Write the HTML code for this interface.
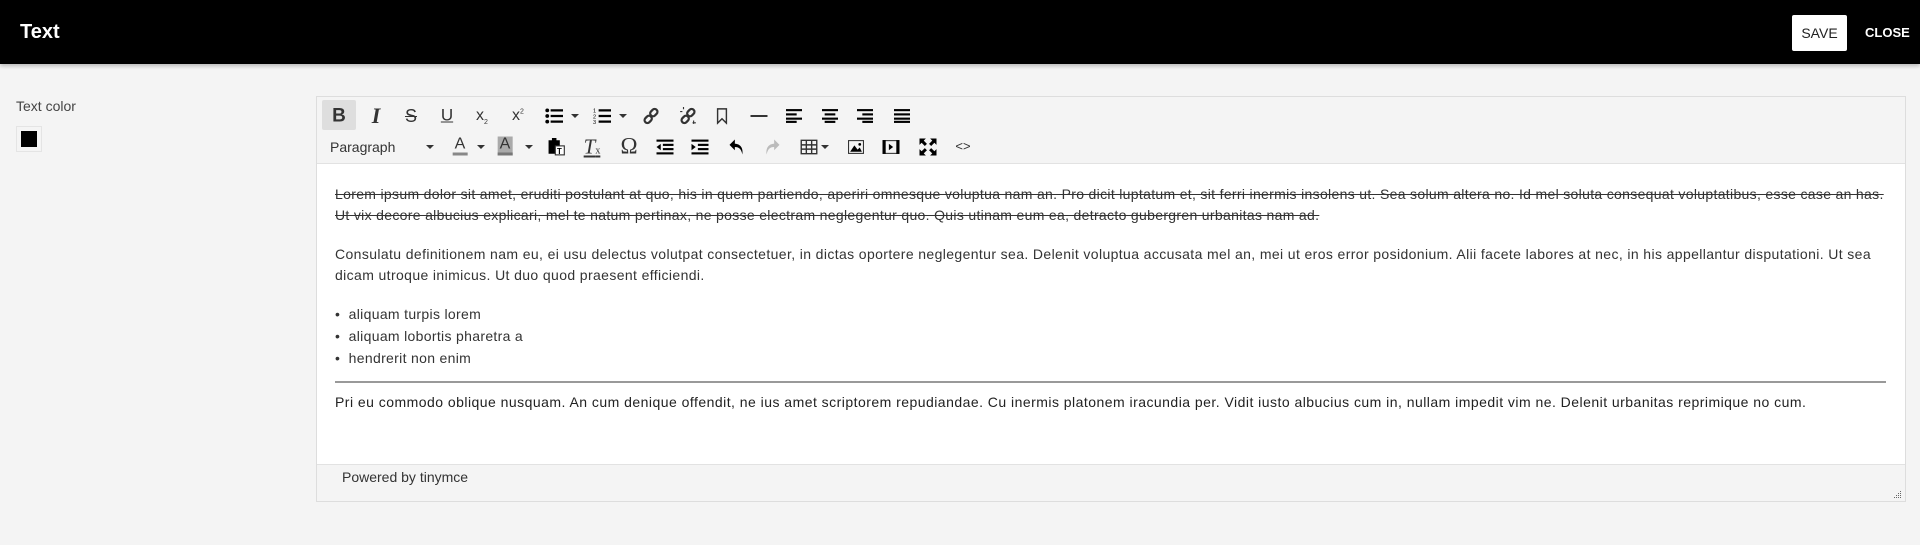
<!DOCTYPE html>
<html><head><meta charset="utf-8"><style>
*{margin:0;padding:0;box-sizing:border-box}
body{width:1920px;height:545px;background:#f4f4f4;font-family:"Liberation Sans",sans-serif;color:#333;position:relative;overflow:hidden}
.hdr{position:absolute;left:0;top:0;width:1920px;height:64px;background:#000;box-shadow:0 2px 4px rgba(0,0,0,.25)}
.hdr .t{position:absolute;left:20px;top:21px;font-size:20px;color:#fff;font-weight:bold}
.save{position:absolute;left:1792px;top:15px;width:55px;height:36px;background:#fff;border-radius:2px;font-size:14px;color:#222;text-align:center;line-height:36px}
.close{position:absolute;left:1865px;top:15px;line-height:36px;font-size:13px;color:#fff;font-weight:bold}
.lbl{position:absolute;left:16px;top:98px;font-size:14px;color:#444}
.sw{position:absolute;left:16px;top:126px;width:26px;height:26px;border:1px solid #e4e4e4;background:#f4f4f4}
.sw i{position:absolute;left:4px;top:4px;width:16px;height:16px;background:#000}
.ed{position:absolute;left:316px;top:96px;width:1590px;height:406px;border:1px solid #ddd;background:#f4f4f4}
.ct{position:absolute;left:0;top:66px;width:1588px;height:302px;background:#fff;border-top:1px solid #e2e2e2;border-bottom:1px solid #e2e2e2}
.ic{position:absolute;transform:translate(-50%,-50%);line-height:1;color:#333}
.bact{position:absolute;left:5px;top:3px;width:34px;height:30px;background:#dedede;border-radius:2px}
.tx{position:absolute;left:18px;font-size:14px;white-space:nowrap;color:#333;letter-spacing:.32px}
.car{position:absolute;width:0;height:0;border-left:4px solid transparent;border-right:4px solid transparent;border-top:4px solid #333;transform:translate(-50%,-50%)}
</style></head><body>
<div class="hdr"><div class="t">Text</div><div class="save">SAVE</div><div class="close">CLOSE</div></div>
<div class="lbl">Text color</div>
<div class="sw"><i></i></div>
<div class="ed">
<div class="bact"></div>
<div class="ic" style="left:22px;top:19px;font-weight:bold;font-size:19px">B</div>
<div class="ic" style="left:59px;top:19px;font-style:italic;font-family:'Liberation Serif',serif;font-size:22px;font-weight:bold">I</div>
<div class="ic" style="left:94px;top:19px;font-size:18px;text-decoration:line-through">S</div>
<div class="ic" style="left:130px;top:18px;font-size:17px;text-decoration:underline">U</div>
<div class="ic" style="left:165px;top:20px;font-size:16px">x<sub style="font-size:7px">2</sub></div>
<div class="ic" style="left:201px;top:19px;font-size:16px">x<sup style="font-size:7px">2</sup></div>
<svg class="ic" style="left:237px;top:19px" width="18" height="16" viewBox="0 0 16 14"><circle cx="2" cy="2" r="1.7"/><circle cx="2" cy="7" r="1.7"/><circle cx="2" cy="12" r="1.7"/><rect x="5" y="1" width="11" height="2"/><rect x="5" y="6" width="11" height="2"/><rect x="5" y="11" width="11" height="2"/></svg>
<div class="car" style="left:258px;top:19px"></div>
<svg class="ic" style="left:285px;top:19px" width="18" height="16" viewBox="0 0 16 14"><text x="0" y="4" font-size="5">1</text><text x="0" y="9" font-size="5">2</text><text x="0" y="14" font-size="5">3</text><rect x="5" y="1" width="11" height="2"/><rect x="5" y="6" width="11" height="2"/><rect x="5" y="11" width="11" height="2"/></svg>
<div class="car" style="left:306px;top:19px"></div>
<svg class="ic" style="left:334px;top:19px" width="18" height="18" viewBox="0 0 16 16" fill="none" stroke="#333" stroke-width="2"><rect x="8" y="1.5" width="5" height="7" rx="2.5" transform="rotate(45 10.5 5)"/><rect x="3" y="7.5" width="5" height="7" rx="2.5" transform="rotate(45 5.5 11)"/></svg>
<svg class="ic" style="left:371px;top:19px" width="18" height="18" viewBox="0 0 16 16" fill="none" stroke="#333" stroke-width="2"><rect x="8" y="1.5" width="5" height="7" rx="2.5" transform="rotate(45 10.5 5)"/><rect x="3" y="7.5" width="5" height="7" rx="2.5" transform="rotate(45 5.5 11)"/><path d="M1 4h2M4 0v2M13 12v3M12 14h3" stroke-width="1"/></svg>
<svg class="ic" style="left:405px;top:19px" width="11" height="17" viewBox="0 0 10 15" fill="none" stroke="#333" stroke-width="1.3"><path d="M1 1h8v13L5 10 1 14z"/></svg>
<div class="ic" style="left:442px;top:19px;width:17px;height:2px;background:#333"></div>
<svg class="ic" style="left:477px;top:19px" width="16" height="14" viewBox="0 0 15 13"><rect y="0" width="15" height="2"/><rect y="4" width="10" height="2"/><rect y="8" width="15" height="2"/><rect y="11" width="10" height="2"/></svg>
<svg class="ic" style="left:513px;top:19px" width="16" height="14" viewBox="0 0 15 13"><rect y="0" width="15" height="2"/><rect x="2.5" y="4" width="10" height="2"/><rect y="8" width="15" height="2"/><rect x="2.5" y="11" width="10" height="2"/></svg>
<svg class="ic" style="left:548px;top:19px" width="16" height="14" viewBox="0 0 15 13"><rect y="0" width="15" height="2"/><rect x="5" y="4" width="10" height="2"/><rect y="8" width="15" height="2"/><rect x="5" y="11" width="10" height="2"/></svg>
<svg class="ic" style="left:585px;top:19px" width="16" height="14" viewBox="0 0 15 13"><rect y="0" width="15" height="2"/><rect y="4" width="15" height="2"/><rect y="8" width="15" height="2"/><rect y="11" width="15" height="2"/></svg>
<div class="ic" style="left:13px;top:50px;transform:translate(0,-50%);font-size:14px">Paragraph</div>
<div class="car" style="left:113px;top:50px"></div>
<div class="ic" style="left:143px;top:49px;font-size:16px;border-bottom:3px solid #888;padding:0 2px">A</div>
<div class="car" style="left:164px;top:50px"></div>
<div class="ic" style="left:188px;top:49px;font-size:16px;background:#aaa;border-bottom:3px solid #777;padding:0 2px">A</div>
<div class="car" style="left:212px;top:50px"></div>
<svg class="ic" style="left:240px;top:50px" width="17" height="18" viewBox="0 0 15 16"><rect x="0" y="2" width="10" height="12"/><rect x="3" y="0" width="4" height="3"/><rect x="6" y="7" width="8" height="8" fill="#fff" stroke="#333"/><text x="7.5" y="14" font-size="7" font-weight="bold">T</text></svg>
<div class="ic" style="left:275px;top:50px;font-family:'Liberation Serif',serif;font-style:italic;font-size:21px;text-decoration:underline">T<span style="font-size:10px;font-style:normal;text-decoration:none">x</span></div>
<div class="ic" style="left:312px;top:49px;font-family:'Liberation Serif',serif;font-size:23px">Ω</div>
<svg class="ic" style="left:348px;top:50px" width="17" height="15" viewBox="0 0 16 14"><rect width="16" height="2"/><rect x="6" y="4" width="10" height="2"/><rect x="6" y="8" width="10" height="2"/><rect y="12" width="16" height="2"/><path d="M0 7l4-3v6z"/></svg>
<svg class="ic" style="left:383px;top:50px" width="17" height="15" viewBox="0 0 16 14"><rect width="16" height="2"/><rect x="6" y="4" width="10" height="2"/><rect x="6" y="8" width="10" height="2"/><rect y="12" width="16" height="2"/><path d="M4 7L0 4v6z"/></svg>
<svg class="ic" style="left:420px;top:50px" width="15" height="16" viewBox="0 0 14 14"><path d="M5 0L0 5l5 5V7c4 0 6 2 7 7 1-6-2-10-7-10z"/></svg>
<svg class="ic" style="left:455px;top:50px" width="15" height="16" viewBox="0 0 14 14" fill="#bbb"><path d="M9 0l5 5-5 5V7C5 7 3 9 2 14 1 8 4 4 9 4z"/></svg>
<svg class="ic" style="left:492px;top:50px" width="17" height="15" viewBox="0 0 16 14" fill="none" stroke="#333" stroke-width="1.3"><rect x=".7" y=".7" width="14.6" height="12.6"/><path d="M.7 5h14.6M.7 9h14.6M5.5.7v12.6M10.5.7v12.6"/></svg>
<div class="car" style="left:508px;top:50px"></div>
<svg class="ic" style="left:539px;top:50px" width="16" height="14" viewBox="0 0 15 13"><rect x=".5" y=".5" width="14" height="12" fill="none" stroke="#333"/><path d="M2 11l4-6 3 4 2-2 2 4z"/><circle cx="11" cy="4" r="1.3"/></svg>
<svg class="ic" style="left:574px;top:50px" width="17" height="14" viewBox="0 0 16 13"><rect x=".5" y=".5" width="15" height="12" fill="none" stroke="#333"/><rect x="0" y="0" width="3" height="13"/><rect x="13" y="0" width="3" height="13"/><path d="M6 3.5l4 3-4 3z"/></svg>
<svg class="ic" style="left:611px;top:50px" width="17" height="17" viewBox="0 0 16 16"><path d="M0 0h6L4 2l3 3-2 2-3-3-2 2zM16 0v6l-2-2-3 3-2-2 3-3-2-2zM0 16v-6l2 2 3-3 2 2-3 3 2 2zM16 16h-6l2-2-3-3 2-2 3 3 2-2z"/></svg>
<div class="ic" style="left:646px;top:49px;font-size:13px">&lt;&gt;</div>
<div class="ct">
<div class="tx" style="top:20px;text-decoration:line-through;line-height:21px">Lorem ipsum dolor sit amet, eruditi postulant at quo, his in quem partiendo, aperiri omnesque voluptua nam an. Pro dicit luptatum et, sit ferri inermis insolens ut. Sea solum altera no. Id mel soluta consequat voluptatibus, esse case an has.<br>Ut vix decore albucius explicari, mel te natum pertinax, ne posse electram neglegentur quo. Quis utinam eum ea, detracto gubergren urbanitas nam ad.</div>
<div class="tx" style="top:80px;line-height:21px;letter-spacing:.38px">Consulatu definitionem nam eu, ei usu delectus volutpat consectetuer, in dictas oportere neglegentur sea. Delenit voluptua accusata mel an, mei ut eros error posidonium. Alii facete labores at nec, in his appellantur disputationi. Ut sea<br>dicam utroque inimicus. Ut duo quod praesent efficiendi.</div>
<div class="tx" style="top:139px;line-height:22px">•&nbsp;&nbsp;aliquam turpis lorem<br>•&nbsp;&nbsp;aliquam lobortis pharetra a<br>•&nbsp;&nbsp;hendrerit non enim</div>
<div style="position:absolute;left:18px;top:217px;width:1551px;height:2px;background:#999"></div>
<div class="tx" style="top:228px;line-height:21px;color:#222;letter-spacing:.47px">Pri eu commodo oblique nusquam. An cum denique offendit, ne ius amet scriptorem repudiandae. Cu inermis platonem iracundia per. Vidit iusto albucius cum in, nullam impedit vim ne. Delenit urbanitas reprimique no cum.</div>
</div>
<div style="position:absolute;left:25px;top:370px;font-size:14px;line-height:20px;color:#333">Powered by tinymce</div>
<svg style="position:absolute;left:1576px;top:393px" width="8" height="8" viewBox="0 0 8 8" fill="#666"><rect x="7" y="1" width="1" height="1"/><rect x="5" y="3" width="1" height="1"/><rect x="7" y="3" width="1" height="1"/><rect x="3" y="5" width="1" height="1"/><rect x="5" y="5" width="1" height="1"/><rect x="7" y="5" width="1" height="1"/><rect x="1" y="7" width="1" height="1"/><rect x="3" y="7" width="1" height="1"/><rect x="5" y="7" width="1" height="1"/><rect x="7" y="7" width="1" height="1"/></svg>
</div>
</body></html>
